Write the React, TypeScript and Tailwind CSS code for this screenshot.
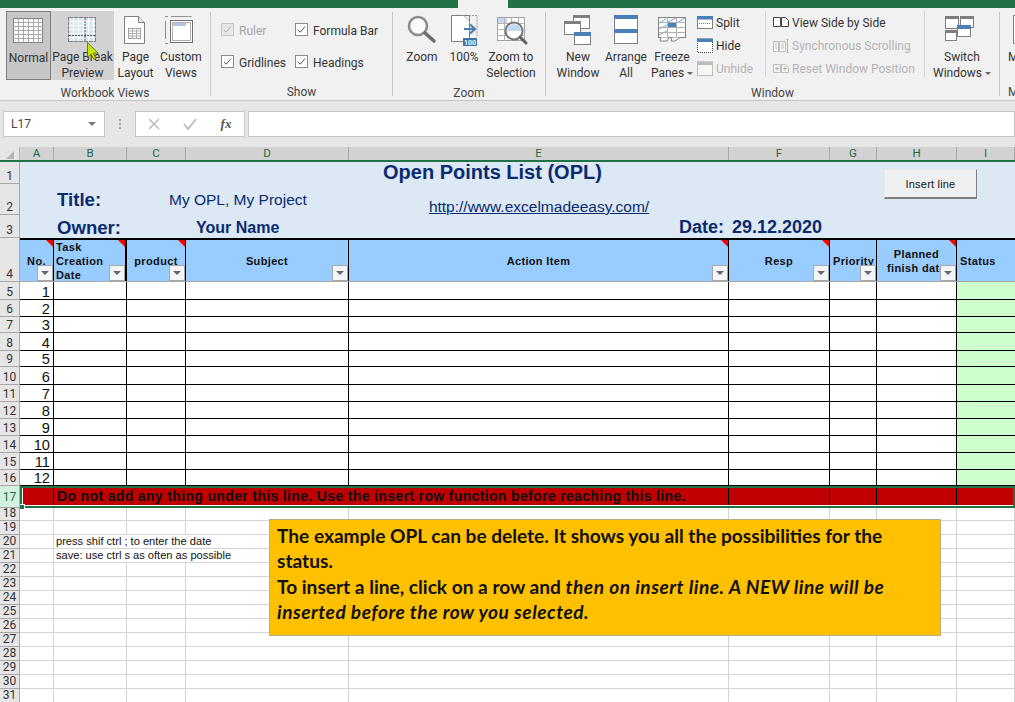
import React from "react";

const COLS = "grid grid-rows-1 grid-cols-[20px_34px_73px_59px_163px_380px_101px_47px_80px_58px]";
const UI = "font-['Roboto',sans-serif]";
const SHEET = "font-['Liberation_Sans',sans-serif]";
const NAVY = "text-[#0b2a6f]";
const BLUE = "#4a7fb8";

function Sep() {
  return <div className="w-px h-[84px] mt-[4px] bg-[#c8c8c8] shrink-0" />;
}

function Big({ w, x, lines, icon, cls = "", arrow }: { w: number; x: number; lines: string[]; icon: React.ReactNode; cls?: string; arrow?: boolean }) {
  return (
    <div className={`flex flex-col items-center h-[69px] shrink-0 ${cls}`} style={{ width: w }}>
      <svg width={w} height={38} viewBox={`${x} 11 ${w} 38`} className="shrink-0 block">{icon}</svg>
      {lines.map((l, i) => (
        <div key={l} className="h-[16px] leading-[16px] text-[12px] text-[#333] whitespace-nowrap flex items-center">
          {l}
          {arrow && i === lines.length - 1 && <span className="ml-[3px] w-0 h-0 border-x-[3px] border-x-transparent border-t-[3px] border-t-[#666]" />}
        </div>
      ))}
    </div>
  );
}

function GroupLabel({ children }: { children: React.ReactNode }) {
  return <div className="h-[16px] leading-[16px] mt-[5px] text-[12px] text-center text-[#444] whitespace-nowrap">{children}</div>;
}

function Check({ label, disabled }: { label: string; disabled?: boolean }) {
  return (
    <div className="flex items-center h-[13px]">
      <div className={`w-[13px] h-[13px] border flex items-center justify-center ${disabled ? "border-[#c6c6c6] bg-[#e6e6e6]" : "border-[#8a8a8a] bg-white"}`}>
        <svg width="9" height="9" viewBox="0 0 9 9"><path d="M1 5l2.2 2.2L8 1.6" fill="none" stroke={disabled ? "#b0b0b0" : "#555"} strokeWidth="1" /></svg>
      </div>
      <span className={`ml-[5px] mt-[3px] text-[12px] leading-[13px] whitespace-nowrap ${disabled ? "text-[#a6a6a6]" : "text-[#333]"}`}>{label}</span>
    </div>
  );
}

function GridLines({ x, y, w, h, dx, dy, c }: { x: number; y: number; w: number; h: number; dx: number; dy: number; c: string }) {
  const v: React.ReactNode[] = [];
  for (let i = x + dx; i < x + w; i += dx) v.push(<line key={"v" + i} x1={i} y1={y} x2={i} y2={y + h} stroke={c} strokeWidth="1" />);
  for (let j = y + dy; j < y + h; j += dy) v.push(<line key={"h" + j} x1={x} y1={j} x2={x + w} y2={j} stroke={c} strokeWidth="1" />);
  return <>{v}</>;
}

function SmallRow({ icon, label, disabled }: { icon: React.ReactNode; label: string; disabled?: boolean }) {
  return (
    <div className="flex items-center h-[23px] whitespace-nowrap">
      <svg width="16" height="16" viewBox="0 0 16 16" className="shrink-0">{icon}</svg>
      <span className={`ml-[3px] text-[12px] ${disabled ? "text-[#b4b4b4]" : "text-[#333]"}`}>{label}</span>
    </div>
  );
}

function Win({ x, y, w, h, bar, t }: { x: number; y: number; w: number; h: number; bar: string; t: number }) {
  return (
    <g>
      <rect x={x + 0.5} y={y + 0.5} width={w - 1} height={h - 1} fill="#fff" stroke="#7f7f7f" />
      <rect x={x} y={y} width={w} height={t} fill={bar} />
    </g>
  );
}

function Ribbon() {
  return (
    <div className={`flex h-[93px] bg-[#f1f1f1] border-b border-[#c6c6c6] overflow-hidden ${UI}`}>
      {/* Workbook Views */}
      <div className="w-[210px] shrink-0 pt-[3px] flex flex-col">
        <div className="flex pl-[6px]">
          <Big
            w={45} x={6} cls="bg-[#c6c6c6] border-[1px] border-[#808080] box-border"
            lines={["Normal"]}
            icon={<g><rect x="13.5" y="17.5" width="29" height="24" fill="#fff" stroke="#808080" /><GridLines x={13.5} y={17.5} w={29} h={24} dx={5} dy={4} c="#a8a8a8" /></g>}
          />
          <Big
            w={63} x={51} cls="bg-[#d2d2d2]"
            lines={["Page Break", "Preview"]}
            icon={<g><rect x="68.5" y="17.5" width="27" height="24" fill="#dbe6f3" stroke="#808080" /><GridLines x={68.5} y={17.5} w={27} h={24} dx={5} dy={4} c="#fff" /><line x1="85" y1="18" x2="85" y2="41" stroke="#555" strokeDasharray="2 1" /><line x1="69" y1="35.5" x2="95" y2="35.5" stroke="#555" strokeDasharray="2 1" /></g>}
          />
          <Big
            w={43} x={114}
            lines={["Page", "Layout"]}
            icon={<g><path d="M124.5 16.5h14l6 6v21h-20z" fill="#fff" stroke="#808080" /><path d="M138.5 16.5v6h6" fill="#e6e6e6" stroke="#808080" /><rect x="128.5" y="28.5" width="12" height="10" fill="#fff" stroke="#a0a0a0" /><GridLines x={128.5} y={28.5} w={12} h={10} dx={4} dy={2.5} c="#b0b0b0" /></g>}
          />
          <Big
            w={48} x={157}
            lines={["Custom", "Views"]}
            icon={<g><path d="M165.5 21v18M165 16.5h3M165 43.5h3M188.5 16.5h3M171 16.5h17" fill="none" stroke="#909090" /><rect x="170.5" y="20.5" width="22" height="22" fill="#fff" stroke="#707070" /><rect x="173" y="23" width="13" height="3" fill="#b4c7e2" /><rect x="172.5" y="22.5" width="18" height="18" fill="none" stroke="#b0b0b0" /></g>}
          />
        </div>
        <GroupLabel>Workbook Views</GroupLabel>
      </div>
      <Sep />
      {/* Show */}
      <div className="w-[181px] shrink-0 pt-[3px] flex flex-col">
        <div className="h-[69px] pl-[10px] pt-[12px] grid grid-cols-[74px_1fr] gap-y-[19px] content-start">
          <Check label="Ruler" disabled />
          <Check label="Formula Bar" />
          <Check label="Gridlines" />
          <Check label="Headings" />
        </div>
        <GroupLabel>Show</GroupLabel>
      </div>
      <Sep />
      {/* Zoom */}
      <div className="w-[152px] shrink-0 pt-[3px] flex flex-col">
        <div className="flex pl-[7px]">
          <Big
            w={44} x={400} lines={["Zoom"]}
            icon={<g><circle cx="418" cy="26" r="9" fill="#fbfbfb" stroke="#8c8c8c" strokeWidth="2.6" /><line x1="425" y1="33" x2="434" y2="41" stroke="#6e6e6e" strokeWidth="3.6" strokeLinecap="round" /></g>}
          />
          <Big
            w={40} x={444} lines={["100%"]}
            icon={<g><path d="M451.5 15.5h12l6 6v20h-18z" fill="#fff" stroke="#808080" /><path d="M463.5 15.5h6v6" fill="#eee" stroke="#808080" /><path d="M469 15.5h8V37" fill="none" stroke="#a0a0a0" strokeDasharray="2 1" /><path d="M464 29h10M470 24.5l5 4.5-5 4.5" fill="none" stroke={BLUE} strokeWidth="2.2" /><rect x="463" y="38" width="14" height="8" fill="#3f74aa" /><text x="470" y="44.6" textAnchor="middle" fontSize="7" fontWeight="700" fill="#fff">100</text></g>}
          />
          <Big
            w={54} x={484} lines={["Zoom to", "Selection"]}
            icon={<g><rect x="497.5" y="17.5" width="27" height="23" fill="#fff" stroke="#a0a0a0" /><rect x="498" y="18" width="9" height="6" fill="#c5d9ee" /><GridLines x={497.5} y={17.5} w={27} h={23} dx={7} dy={6} c="#b4b4b4" /><circle cx="514" cy="31" r="8.5" fill="#fff" stroke="#777" strokeWidth="2" /><path d="M507 31a7 7 0 0 1 14 0z" fill="#c5d9ee" /><line x1="520" y1="37" x2="526" y2="43" stroke="#606060" strokeWidth="3" strokeLinecap="round" /></g>}
          />
        </div>
        <GroupLabel>Zoom</GroupLabel>
      </div>
      <Sep />
      {/* Window */}
      <div className="w-[453px] shrink-0 pt-[3px] flex flex-col">
        <div className="flex pl-[8px]">
          <Big
            w={48} x={554} lines={["New", "Window"]}
            icon={<g><Win x={573} y={15} w={17} h={14} bar="#7f7f7f" t={3} /><Win x={564} y={21} w={17} h={14} bar="#7f7f7f" t={3} /><Win x={574} y={32} w={17} h={13} bar={BLUE} t={4} /></g>}
          />
          <Big
            w={48} x={602} lines={["Arrange", "All"]}
            icon={<g><rect x="614.5" y="15.5" width="23" height="28" fill="#fff" stroke="#7f7f7f" /><rect x="614" y="15" width="24" height="4" fill={BLUE} /><rect x="614" y="29" width="24" height="4" fill={BLUE} /></g>}
          />
          <Big
            w={44} x={650} lines={["Freeze", "Panes"]} arrow
            icon={<g><rect x="658.5" y="17.5" width="27" height="20" fill="#fff" stroke="#808080" /><path d="M659 23l7-4M668 22l8-4M678 22l7-4M659 29l8-4M659 35l8-4" stroke="#8fb4dc" strokeWidth="1.2" fill="none" /><GridLines x={658.5} y={17.5} w={27} h={20} dx={9} dy={5} c="#b0b0b0" /><rect x="668" y="23" width="8" height="4" fill={BLUE} /><path d="M661 37.5l-1 3.5h7l2-3.5M672 37.5l-1 3.5h4l5-3.5" fill="#fff" stroke="#808080" /></g>}
          />
          <div className="w-[71px] shrink-0 pl-[3px] h-[69px]">
            <SmallRow label="Split" icon={<g><rect x="0.5" y="1.5" width="15" height="12" fill="#fff" stroke="#7f7f7f" /><rect x="0" y="1" width="16" height="3.5" fill={BLUE} /><line x1="2" y1="8.5" x2="14" y2="8.5" stroke={BLUE} strokeDasharray="1 1" /></g>} />
            <SmallRow label="Hide" icon={<g><rect x="0.5" y="1" width="15" height="13.5" fill="#fff" stroke="#444" strokeDasharray="1 1" /><rect x="0" y="0.5" width="16" height="3.5" fill={BLUE} /></g>} />
            <SmallRow label="Unhide" disabled icon={<g><rect x="0.5" y="1" width="15" height="13.5" fill="#f6f6f6" stroke="#bdbdbd" /><rect x="0" y="0.5" width="16" height="3.5" fill="#bdbdbd" /></g>} />
          </div>
          <div className="w-px h-[66px] bg-[#d4d4d4] shrink-0" />
          <div className="w-[158px] shrink-0 pl-[7px] h-[69px]">
            <SmallRow label="View Side by Side" icon={<g><path d="M0.5 2.5h7v9h-7zM8.5 2.5h4l3 3v6h-7z" fill="#fff" stroke="#444" /></g>} />
            <SmallRow label="Synchronous Scrolling" disabled icon={<g><path d="M0.5 3.5h5v10h-5zM6.5 3.5h6v10h-6z" fill="#f4f4f4" stroke="#bdbdbd" /><path d="M14.5 1.5v13M13.5 1.5h2M13.5 14.5h2" stroke="#b4b4b4" /><path d="M2 6h2M2 8h2M2 10h2M8 6h3M8 8h3M8 10h3" stroke="#c6c6c6" /></g>} />
            <SmallRow label="Reset Window Position" disabled icon={<g><path d="M0.5 3.5h7v8h-7zM8.5 3.5h4l3 3v5h-7z" fill="#f4f4f4" stroke="#bdbdbd" /><path d="M2 7.5h4M4 5.5v4M10 7.5h4M12 5.5v4" stroke="#b0b0b0" /></g>} />
          </div>
          <div className="w-px h-[66px] bg-[#d4d4d4] shrink-0" />
          <Big
            w={74} x={925} lines={["Switch", "Windows"]} arrow
            icon={<g><Win x={945} y={16} w={14} h={13} bar="#7f7f7f" t={3} /><Win x={960} y={16} w={14} h={12} bar="#7f7f7f" t={3} /><Win x={945} y={30} w={12} h={11} bar="#7f7f7f" t={3} /><Win x={957} y={25} w={14} h={12} bar={BLUE} t={4} /></g>}
          />
        </div>
        <GroupLabel>Window</GroupLabel>
      </div>
      <Sep />
      {/* Macros, clipped by the window */}
      <div className="shrink-0 pt-[3px] pl-[8px] flex flex-col w-[80px]">
        <div className="h-[69px]">
          <svg width="20" height="38" viewBox="1008 11 20 38" className="block"><rect x="1013.5" y="15.5" width="14" height="28" fill="#fff" stroke="#808080" /></svg>
          <div className="h-[16px] leading-[16px] text-[12px] text-[#333]">Macros</div>
        </div>
        <div className="h-[16px] leading-[16px] mt-[5px] text-[12px] text-[#444]">Macros</div>
      </div>
    </div>
  );
}

function FormulaBar() {
  return (
    <div className={`flex items-start h-[46px] bg-[#e6e6e6] pt-[10px] pl-[3px] ${UI}`}>
      <div className="w-[102px] h-[26px] bg-white border border-[#c6c6c6] flex items-center justify-between pl-[7px] pr-[8px]">
        <span className="text-[12px] text-[#444]">L17</span>
        <span className="w-0 h-0 border-x-[4px] border-x-transparent border-t-[4px] border-t-[#777]" />
      </div>
      <div className="w-[30px] h-[26px] flex flex-col items-center justify-center gap-[2px]">
        <span className="w-[2px] h-[2px] bg-[#a0a0a0]" />
        <span className="w-[2px] h-[2px] bg-[#a0a0a0]" />
        <span className="w-[2px] h-[2px] bg-[#a0a0a0]" />
      </div>
      <div className="w-[110px] h-[26px] bg-white border border-[#c6c6c6] grid grid-cols-3 items-center justify-items-center">
        <svg width="12" height="12" viewBox="0 0 12 12"><path d="M1 1l10 10M11 1L1 11" stroke="#bdbdbd" strokeWidth="1.6" /></svg>
        <svg width="14" height="12" viewBox="0 0 14 12"><path d="M1 6l4 5 8-10" fill="none" stroke="#bdbdbd" strokeWidth="2" /></svg>
        <span className="font-['Liberation_Serif',serif] italic font-bold text-[13px] text-[#555]">fx</span>
      </div>
      <div className="ml-[3px] flex-1 h-[26px] bg-white border border-[#c6c6c6]" />
    </div>
  );
}

function ColHeaders() {
  const names = ["A", "B", "C", "D", "E", "F", "G", "H", "I"];
  return (
    <div className={`${COLS} h-[15px] border-b-2 border-[#217346] ${UI}`}>
      <div className="bg-[#e6e6e6] flex items-end justify-center pb-[1px] border-r border-[#b4b4b4]">
        <span className="w-0 h-0 border-l-[8px] border-l-transparent border-b-[8px] border-b-[#b4b4b4]" />
      </div>
      {names.map((n) => (
        <div key={n} className="bg-[#d2d2d2] border-r border-[#a8a8a8] text-[11.5px] leading-[13px] text-center text-[#1e6b42]">{n}</div>
      ))}
    </div>
  );
}

function RowHead({ n, active }: { n: number; active?: boolean }) {
  return (
    <div className={`flex justify-center border-r border-b border-[#a8a8a8] text-[12px] leading-[12px] ${UI} ${active ? "bg-[#d3f0e0] text-[#1e6b42] items-center" : "bg-[#e6e6e6] text-[#333] items-end pb-[1px]"}`}>{n}</div>
  );
}

function Corner() {
  return <div className="absolute top-0 right-0 w-[7px] h-[7px] bg-[#ff0000] [clip-path:polygon(0_0,100%_0,100%_100%)]" />;
}

function Filter() {
  return (
    <div className="absolute right-0 bottom-0 w-[16px] h-[16px] bg-[#f4f5f8] border border-[#a8a8a8] flex items-center justify-center">
      <span className="w-0 h-0 border-x-[4px] border-x-transparent border-t-[4px] border-t-[#666]" />
    </div>
  );
}

function HeadCell({ children, cls = "", corner = true, filter = true }: { children?: React.ReactNode; cls?: string; corner?: boolean; filter?: boolean }) {
  return (
    <div className={`relative bg-[#99ccff] overflow-hidden flex items-center text-[11px] font-bold leading-[14px] tracking-[0.35px] text-[#111] ${cls}`}>
      {children}
      {corner && <Corner />}
      {filter && <Filter />}
    </div>
  );
}

const DATA_ROWS: [number, string][] = [
  [1, "h-[18px]"], [2, "h-[17px]"], [3, "h-[16px]"], [4, "h-[18px]"], [5, "h-[16px]"], [6, "h-[18px]"],
  [7, "h-[17px]"], [8, "h-[17px]"], [9, "h-[17px]"], [10, "h-[17px]"], [11, "h-[17px]"], [12, "h-[16px]"],
];

function Cell({ cls = "" }: { cls?: string }) {
  return <div className={`border-b border-black ${cls}`} />;
}

const GRID_CELL = "border-r border-b border-[#d4d4d4]";

function Blank({ n, h, children }: { n: number; h: string; children?: React.ReactNode }) {
  const rest = Array.from({ length: children ? 5 : 8 });
  return (
    <div className={`${COLS} ${h}`}>
      <RowHead n={n} />
      <div className={GRID_CELL} />
      {children ? (
        <div className={`col-span-3 ${GRID_CELL} whitespace-nowrap pl-[2px] text-[11.1px] leading-[13px] text-[#111] ${SHEET}`}>{children}</div>
      ) : null}
      {rest.map((_, i) => <div key={i} className={GRID_CELL} />)}
    </div>
  );
}

function Sheet() {
  return (
    <div className={`relative ${SHEET}`}>
      <ColHeaders />
      {/* Rows 1-3 */}
      <div className={`${COLS} h-[22px] bg-[#dce9f5]`}>
        <RowHead n={1} />
        <div className={`col-span-9 pl-[363px] whitespace-nowrap text-[20px] leading-[21px] font-bold ${NAVY}`}>Open Points List (OPL)</div>
      </div>
      <div className={`${COLS} h-[31px] bg-[#dce9f5]`}>
        <RowHead n={2} />
        <div className={`col-span-2 pl-[37px] pt-[5px] text-[18.6px] leading-[22px] font-bold ${NAVY}`}>Title:</div>
        <div className={`col-span-2 pl-[42px] pt-[5px] whitespace-nowrap text-[15.5px] leading-[22px] ${NAVY}`}>My OPL, My Project</div>
        <div className={`text-center pt-[14px] text-[15.5px] leading-[18px] underline ${NAVY}`}>http://www.excelmadeeasy.com/</div>
      </div>
      <div className={`${COLS} h-[23px] bg-[#dce9f5]`}>
        <RowHead n={3} />
        <div className={`col-span-2 pl-[37px] text-[18.6px] leading-[25px] font-bold ${NAVY}`}>Owner:</div>
        <div className={`col-span-2 pl-[69px] whitespace-nowrap text-[16px] leading-[25px] font-bold ${NAVY}`}>Your Name</div>
        <div className={`text-right pr-[5px] text-[18px] leading-[25px] font-bold ${NAVY}`}>Date:</div>
        <div className={`col-span-2 pl-[3px] text-[18px] leading-[25px] font-bold ${NAVY}`}>29.12.2020</div>
      </div>
      {/* Row 4 */}
      <div className={`${COLS} h-[44px]`}>
        <RowHead n={4} />
        <div className="col-span-9 grid grid-rows-1 grid-cols-[34px_73px_59px_163px_380px_101px_47px_80px_58px] border-t-2 border-b border-t-black border-b-[#a8a8a8]">
          <HeadCell cls="justify-center border-r border-black"><span>No.</span></HeadCell>
          <HeadCell cls="pl-[2px] border-r-2 border-black"><span>Task<br />Creation<br />Date</span></HeadCell>
          <HeadCell cls="justify-center border-r border-black"><span>product</span></HeadCell>
          <HeadCell cls="justify-center border-r border-black" corner={false}><span>Subject</span></HeadCell>
          <HeadCell cls="justify-center border-r border-black"><span>Action Item</span></HeadCell>
          <HeadCell cls="justify-center border-r border-black"><span>Resp</span></HeadCell>
          <HeadCell cls="pl-[3px] whitespace-nowrap border-r border-black" corner={false}><span>Priority</span></HeadCell>
          <HeadCell cls="justify-center text-center whitespace-nowrap border-r border-black"><span>Planned<br />finish date</span></HeadCell>
          <HeadCell cls="pl-[3px]" corner={false} filter={false}><span>Status</span></HeadCell>
        </div>
      </div>
      {/* Rows 5-16 */}
      {DATA_ROWS.map(([k, h]) => (
        <div key={k} className={`${COLS} ${h} bg-white`}>
          <RowHead n={k + 4} />
          <div className="border-r border-b border-black flex items-end justify-end pr-[3px] text-[14.67px] leading-[14px] text-[#111]">{k}</div>
          <Cell cls="border-r" /><Cell cls="border-r" /><Cell cls="border-r" /><Cell cls="border-r" /><Cell cls="border-r" /><Cell cls="border-r" /><Cell cls="border-r" />
          <Cell cls="bg-[#ccffcc]" />
        </div>
      ))}
      {/* Row 17 */}
      <div className={`${COLS} h-[22px] relative`}>
        <RowHead n={17} active />
        <div className="bg-[#c00000] border-r border-black" />
        <div className="col-span-4 bg-[#c00000] border-r border-black pl-[3px] pt-[1px] whitespace-nowrap text-[14px] leading-[18px] font-bold tracking-[0.35px] text-[#111]">
          Do not add any thing under this line. Use the insert row function before reaching this line.
        </div>
        <div className="bg-[#c00000] border-r border-black" />
        <div className="bg-[#c00000] border-r border-black" />
        <div className="bg-[#c00000] border-r border-black" />
        <div className="bg-[#c00000]" />
        <div className="absolute left-[20px] right-0 top-0 bottom-0 border-2 border-[#217346] pointer-events-none">
          <div className="absolute left-0 right-0 bottom-0 h-px bg-white" />
          <div className="absolute left-0 top-0 bottom-0 w-px bg-white" />
        </div>
        <div className="absolute left-[20px] bottom-[-1px] w-[5px] h-[5px] bg-[#217346] border-t border-r border-white" />
      </div>
      {/* Rows 18-31 */}
      <Blank n={18} h="h-[13px]" />
      <Blank n={19} h="h-[14px]" />
      <Blank n={20} h="h-[14px]">press shif ctrl ; to enter the date</Blank>
      <Blank n={21} h="h-[14px]">save: use ctrl s as often as possible</Blank>
      {[22, 23, 24, 25, 26, 27, 28, 29, 30, 31].map((n) => <Blank key={n} n={n} h="h-[14px]" />)}
    </div>
  );
}

export default function App() {
  return (
    <div className="relative w-[1015px] h-[702px] overflow-hidden bg-white">
      <div className="h-[8px] bg-[#217346] flex">
        <div className="ml-[458px] w-[50px] bg-[#f1f1f1]" />
      </div>
      <Ribbon />
      <FormulaBar />
      <Sheet />

      {/* Insert line button */}
      <div className={`absolute left-[884px] top-[169px] w-[93px] h-[30px] bg-[#f0f0f0] border border-[#e8e8e8] border-r-[#808080] border-b-[#808080] border-b-2 pt-[1px] flex items-center justify-center text-[11px] tracking-[0.2px] text-[#111] ${SHEET}`}>
        Insert line
      </div>

      {/* Text box */}
      <div className="absolute left-[269px] top-[519px] w-[672px] h-[117px] bg-[#ffc000] border border-[#b8ac80] pl-[7px] pt-[3px] font-['Lato',sans-serif] font-bold text-[19.1px] leading-[25.3px] text-[#111]">
        <p className="whitespace-nowrap">The example OPL can be delete. It shows you all the possibilities for the</p>
        <p>status.</p>
        <p className="whitespace-nowrap">To insert a line, click on a row and <em className="tracking-[0.5px]">then on insert line. A NEW line will be</em></p>
        <p className="whitespace-nowrap"><em className="tracking-[0.5px]">inserted before the row you selected.</em></p>
      </div>

      {/* Mouse pointer */}
      <svg className="absolute left-[86px] top-[41px]" width="14" height="20" viewBox="0 0 14 20">
        <path d="M1.5 1.5v15l3.5-3.2 3 5.2 2.2-1.2-3-5h5z" fill="#c4e600" stroke="#56600a" strokeWidth="0.8" />
      </svg>
    </div>
  );
}
